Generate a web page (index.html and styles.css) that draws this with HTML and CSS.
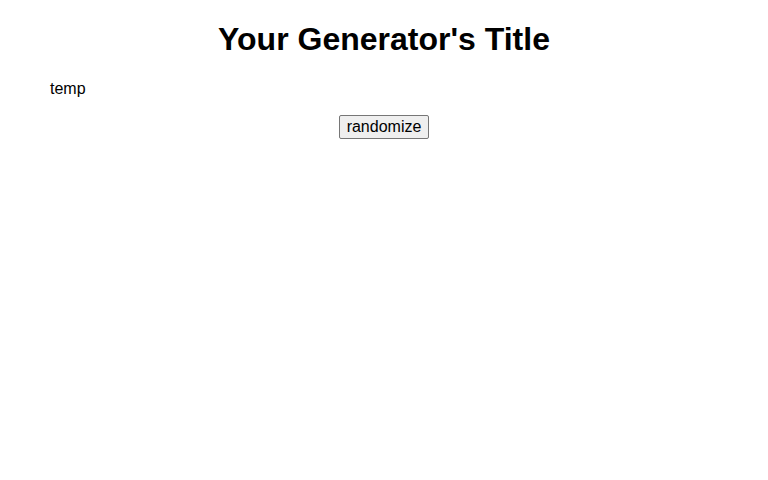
FILE: index.html
```html
<!DOCTYPE html>
<html>
<head>
<meta charset="utf-8">
<link rel="stylesheet" href="styles.css">
</head>
<body>
<h1 class="title">Your Generator's Title</h1>
<div class="output">temp</div>
<div class="controls"><button class="btn">randomize</button></div>
</body>
</html>
```
FILE: styles.css
```css
html, body { margin: 0; padding: 0; background: #fff; }
body { font-family: "Liberation Sans", Arial, sans-serif; color: #000; padding: 21px 0 0; }
.title { font-size: 32px; font-weight: bold; text-align: center; margin: 0; line-height: 37px; }
.output { font-size: 16px; line-height: 18px; margin: 22px 0 0 50px; }
.controls { text-align: center; margin-top: 17px; }
.btn { font-family: "Liberation Sans", Arial, sans-serif; font-size: 16px; padding: 1px 7px; height: 24px; border: 1px solid #767676; border-radius: 2px; background: #efefef; color: #000; }
```
